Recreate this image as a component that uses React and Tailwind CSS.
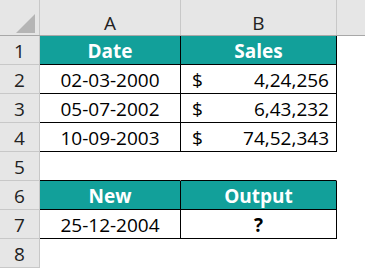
import React from "react";

const font = { fontFamily: '"Open Sans", "Noto Sans", sans-serif' };

function RowNum({ n }) {
  return (
    <div className="w-[40px] shrink-0 border-r border-b border-[#c8c8c8] bg-[#e6e6e6] flex justify-center pt-[2px] text-[19px] leading-[26px] text-[#222]">
      {n}
    </div>
  );
}

function DataRow({ n, a, b, type }) {
  // type: "head" | "date" | "money" | "gap" | "empty" | "q"
  const teal = type === "head";
  const inTable = type !== "gap" && type !== "empty";
  const bottom = type === "empty" ? "border-b-transparent" : "border-b-black";
  const right = inTable ? "border-r-black" : "border-r-transparent";
  const bg = teal ? "bg-[#12a09a]" : "bg-white";
  const txt = teal ? "text-white font-bold" : "text-black";
  return (
    <div className="flex h-[29px]">
      <RowNum n={n} />
      <div
        className={`w-[141px] shrink-0 border-r border-b ${right} ${bottom} ${bg} ${txt} flex justify-center pt-[2px] text-[19px] leading-[26px]`}
      >
        {a}
      </div>
      {type === "money" ? (
        <div
          className={`w-[156px] shrink-0 border-r border-b ${right} ${bottom} bg-white text-black flex justify-between pl-[11px] pr-[7px] pt-[2px] text-[19px] leading-[26px]`}
        >
          <span>$</span>
          <span>{b}</span>
        </div>
      ) : (
        <div
          className={`w-[156px] shrink-0 border-r border-b ${right} ${bottom} ${bg} ${txt} ${type === "q" ? "font-bold" : ""} flex justify-center pt-[2px] text-[19px] leading-[26px]`}
        >
          {b}
        </div>
      )}
      <div className="flex-1 bg-white" />
    </div>
  );
}

export default function App() {
  return (
    <div className="w-[365px] h-[269px] overflow-hidden bg-white" style={font}>
      <div className="flex h-[36px] bg-[#e6e6e6] border-b border-[#a8a8a8] text-[19px] leading-[26px] text-[#222]">
        <div className="w-[40px] shrink-0 border-r border-[#c8c8c8] flex items-end justify-end pr-[4px] pb-[2px]">
          <svg width="19" height="19" viewBox="0 0 19 19">
            <polygon points="19,0 19,19 0,19" fill="#b5b5b5" />
          </svg>
        </div>
        <div className="w-[141px] shrink-0 border-r border-[#c8c8c8] flex justify-center pt-[10px]">A</div>
        <div className="w-[156px] shrink-0 border-r border-[#c8c8c8] flex justify-center pt-[10px]">B</div>
        <div className="flex-1" />
      </div>
      <DataRow n="1" a="Date" b="Sales" type="head" />
      <DataRow n="2" a="02-03-2000" b="4,24,256" type="money" />
      <DataRow n="3" a="05-07-2002" b="6,43,232" type="money" />
      <DataRow n="4" a="10-09-2003" b="74,52,343" type="money" />
      <DataRow n="5" a="" b="" type="gap" />
      <DataRow n="6" a="New" b="Output" type="head" />
      <DataRow n="7" a="25-12-2004" b="?" type="q" />
      <DataRow n="8" a="" b="" type="empty" />
    </div>
  );
}
